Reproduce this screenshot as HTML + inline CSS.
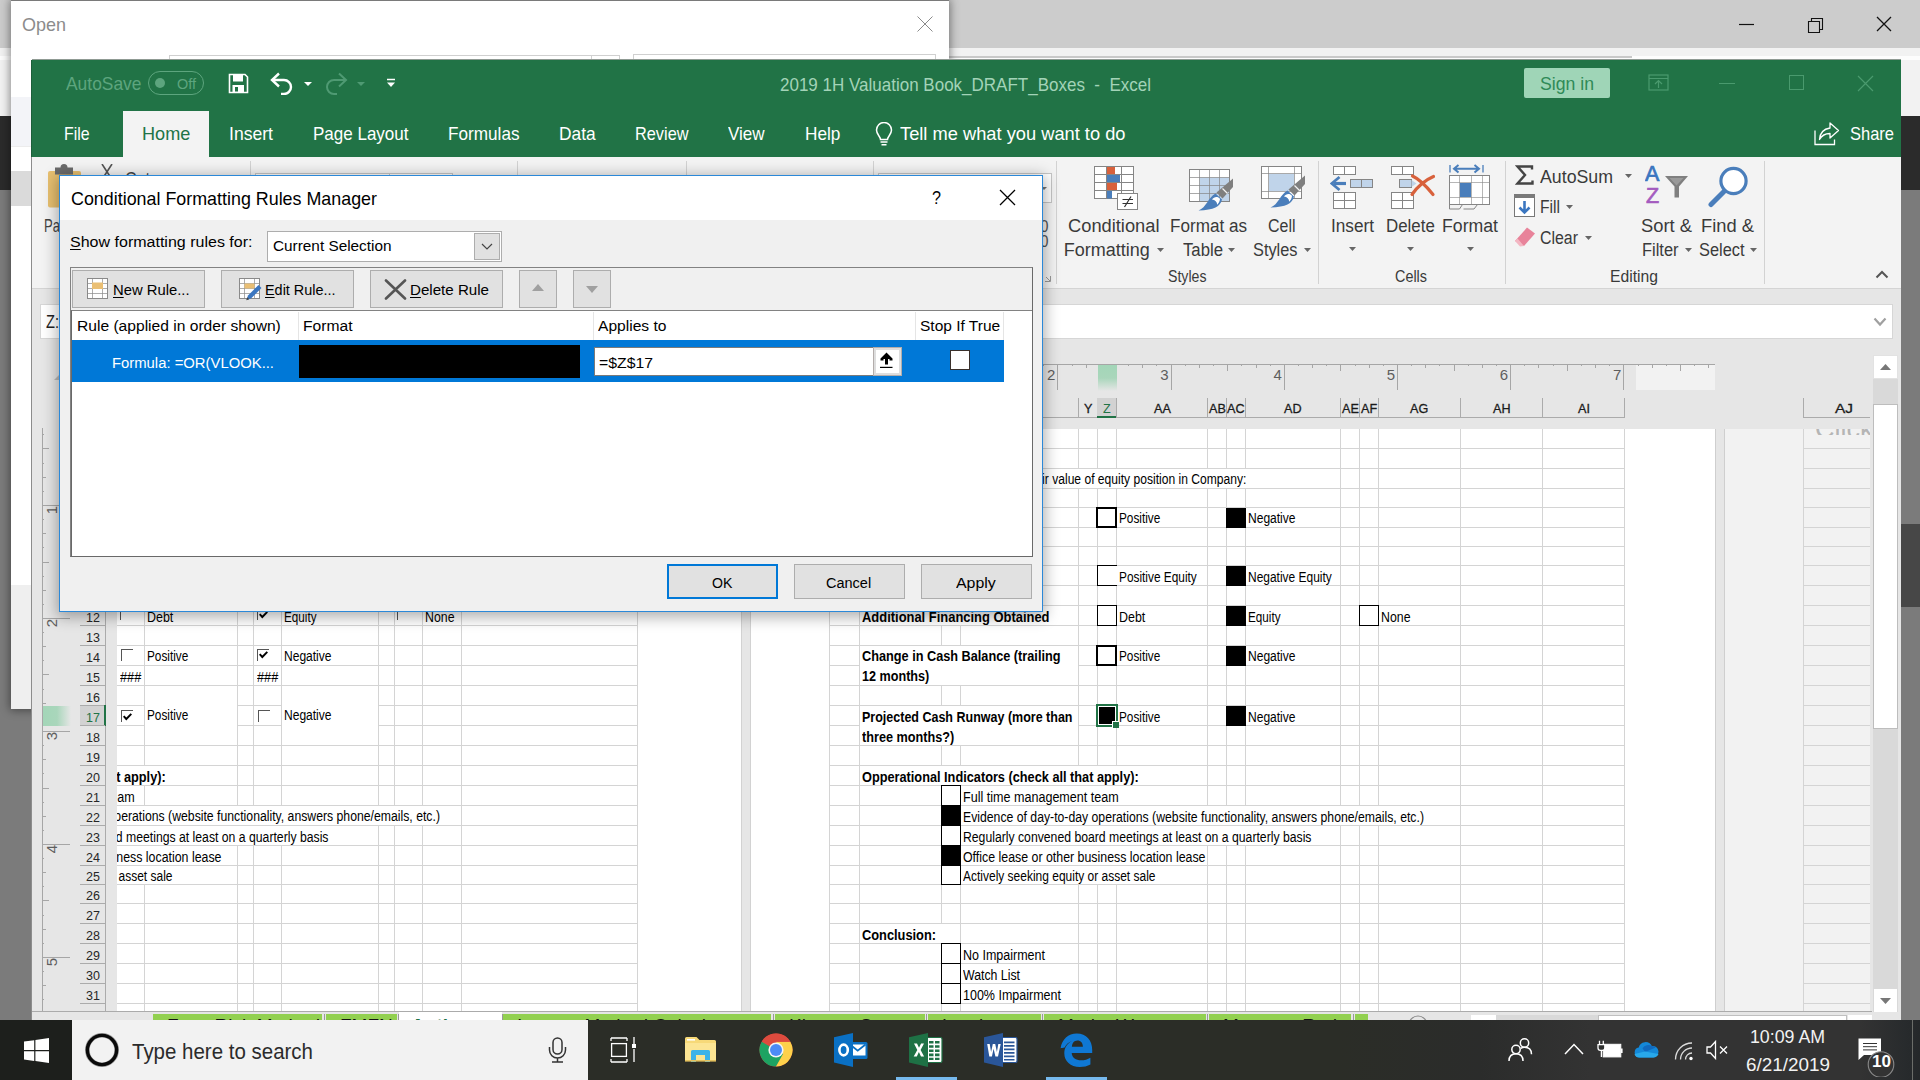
<!DOCTYPE html><html><head><meta charset="utf-8"><title>Excel - Conditional Formatting Rules Manager</title><style>html,body{margin:0;padding:0;}
body{width:1920px;height:1080px;overflow:hidden;position:relative;background:#7b7b7b;font-family:"Liberation Sans",sans-serif;}
div,svg,span.t{position:absolute;}
span.t{white-space:nowrap;transform-origin:0 50%;}
u{text-decoration-thickness:1px;text-underline-offset:2px;}
</style></head><body>
<!-- background -->
<div style="left:0px;top:0px;width:1920px;height:48px;background:#cccccc;"></div><div style="left:0px;top:48px;width:1920px;height:68px;background:#f2f2f2;"></div><div style="left:0px;top:56px;width:1920px;height:4px;background:#fdfdfd;"></div><div style="left:949px;top:56px;width:683px;height:1.6px;background:#c9c9c9;"></div><div style="left:0px;top:116px;width:1920px;height:74.5px;background:#2b2b2b;"></div><div style="left:0px;top:190px;width:1920px;height:890px;background:#7b7b7b;"></div><div style="left:1901px;top:524px;width:19px;height:83px;background:#474747;"></div><svg style="left:1730px;top:8px;" width="170" height="32" viewBox="0 0 170 32"><path d="M9 16.5h15" stroke="#111" stroke-width="1.2" fill="none"/><path d="M78.5 13.5h11v11h-11z M81.500 13.5v-3h11v11h-3" stroke="#111" stroke-width="1.1" fill="none"/><path d="M147 9l14 14M161 9l-14 14" stroke="#111" stroke-width="1.3" fill="none"/></svg><div style="left:11px;top:0px;width:938px;height:709px;background:#ffffff;border-top:1px solid #7a7a7a;box-sizing:border-box;box-shadow:0 0 9px 1px rgba(0,0,0,.45);overflow:hidden;"><div style="left:0px;top:96px;width:21px;height:48.5px;background:#f3f4f8;"></div><div style="left:0px;top:145px;width:21px;height:1px;background:#ececec;"></div><div style="left:0px;top:169.5px;width:21px;height:35px;background:#dadada;"></div><div style="left:0px;top:584px;width:938px;height:125px;background:#efefef;"></div><div style="left:158px;top:54px;width:451px;height:20px;background:#fff;border:1px solid #d0d0d0;box-sizing:border-box;"></div><div style="left:580px;top:54px;width:1px;height:20px;background:#d0d0d0;"></div><div style="left:622px;top:53px;width:303px;height:20px;background:#fff;border:1px solid #d0d0d0;box-sizing:border-box;"></div><span class="t" style="left:11.00px;top:13.50px;font-size:19px;line-height:19px;color:#8c8c8c;transform:scaleX(0.9467);">Open</span><svg style="left:904.5px;top:13.5px;" width="18" height="18" viewBox="0 0 18 18"><path d="M1.5 1.5l15 15M16.5 1.5l-15 15" stroke="#8a8a8a" stroke-width="1" fill="none"/></svg></div>
<!-- excel window -->
<div style="left:31px;top:60px;width:1px;height:97px;background:#1c5e3a;"></div><div style="left:31px;top:157px;width:1px;height:863px;background:#8c8c8c;"></div><div style="left:32px;top:60px;width:1869px;height:960px;background:#e6e6e6;"></div><div style="left:32px;top:60px;width:1869px;height:97px;background:#217346;"></div><div style="left:32px;top:59px;width:1869px;height:1px;background:#8f9a93;"></div><span class="t" style="left:65.50px;top:73.50px;font-size:19px;line-height:19px;color:#5da57e;transform:scaleX(0.9163);">AutoSave</span><div style="left:148px;top:71px;width:56px;height:24px;border:1px solid #5da57e;border-radius:12px;box-sizing:border-box;"></div><div style="left:155px;top:78px;width:10px;height:10px;background:#5da57e;border-radius:5px;"></div><span class="t" style="left:177.00px;top:75.50px;font-size:15px;line-height:15px;color:#5da57e;transform:scaleX(0.9629);">Off</span><svg style="left:228px;top:73px;" width="21" height="21" viewBox="0 0 21 21"><path d="M1.500 1.500h15.500l2.500 2.500v15.500h-18z" fill="none" stroke="#fff" stroke-width="1.600"/><rect x="5" y="1.500" width="10" height="7" fill="#fff"/><rect x="4.500" y="12" width="11.500" height="7.500" fill="#fff"/><rect x="7" y="14" width="3" height="4.500" fill="#217346"/></svg><svg style="left:270px;top:72px;" width="24" height="23" viewBox="0 0 24 23"><path d="M9 1.500L2 8l7 6.500" fill="none" stroke="#fff" stroke-width="2.400"/><path d="M2.500 8H14a7 7 0 0 1 0 14h-3" fill="none" stroke="#fff" stroke-width="2.400"/></svg><svg style="left:304px;top:82px;" width="8" height="4" viewBox="0 0 8 4"><path d="M0 0h8l-4.0 4z" fill="#fff"/></svg><svg style="left:324px;top:72px;" width="24" height="23" viewBox="0 0 24 23"><path d="M15 1.500L22 8l-7 6.500" fill="none" stroke="#4f9a73" stroke-width="2"/><path d="M21.500 8H10a7 7 0 0 0 0 14h3" fill="none" stroke="#4f9a73" stroke-width="2"/></svg><svg style="left:357px;top:82px;" width="8" height="4" viewBox="0 0 8 4"><path d="M0 0h8l-4.0 4z" fill="#4f9a73"/></svg><svg style="left:386px;top:78px;" width="10" height="10" viewBox="0 0 10 10"><path d="M1 1.500h8" stroke="#fff" stroke-width="1.500"/><path d="M1 4.500h8l-4 4.500z" fill="#fff"/></svg><span class="t" style="left:780.00px;top:74.50px;font-size:19px;line-height:19px;color:#a3d3b8;transform:scaleX(0.8947);white-space:pre;">2019 1H Valuation Book_DRAFT_Boxes  -  Excel</span><div style="left:1524px;top:68px;width:86px;height:30px;background:#9fd5b7;border-radius:2px;"></div><span class="t" style="left:1540.00px;top:73.50px;font-size:19px;line-height:19px;color:#2f8a57;transform:scaleX(0.9295);">Sign in</span><svg style="left:1648px;top:74px;" width="22" height="18" viewBox="0 0 22 18"><rect x="1" y="1" width="19" height="15" fill="none" stroke="#4a9a6e" stroke-width="1.200"/><path d="M1 4.500h19M10.500 14V7M7 10l3.500-3.500L14 10" fill="none" stroke="#4a9a6e" stroke-width="1.200"/></svg><div style="left:1719px;top:83px;width:16px;height:1px;background:#4a9a6e;"></div><div style="left:1789px;top:75px;width:15px;height:15px;border:1px solid #4a9a6e;box-sizing:border-box;"></div><svg style="left:1857px;top:75px;" width="17" height="17" viewBox="0 0 17 17"><path d="M1 1l15 15M16 1L1 16" stroke="#4a9a6e" stroke-width="1.200"/></svg><div style="left:123px;top:111px;width:86px;height:46px;background:#f3f3f3;"></div><span class="t" style="left:63.70px;top:123.50px;font-size:19px;line-height:19px;color:#fff;transform:scaleX(0.8362);">File</span><span class="t" style="left:229.00px;top:123.50px;font-size:19px;line-height:19px;color:#fff;transform:scaleX(0.9259);">Insert</span><span class="t" style="left:312.50px;top:123.50px;font-size:19px;line-height:19px;color:#fff;transform:scaleX(0.8951);">Page Layout</span><span class="t" style="left:447.50px;top:123.50px;font-size:19px;line-height:19px;color:#fff;transform:scaleX(0.9030);">Formulas</span><span class="t" style="left:559.00px;top:123.50px;font-size:19px;line-height:19px;color:#fff;transform:scaleX(0.9120);">Data</span><span class="t" style="left:635.30px;top:123.50px;font-size:19px;line-height:19px;color:#fff;transform:scaleX(0.8588);">Review</span><span class="t" style="left:728.40px;top:123.50px;font-size:19px;line-height:19px;color:#fff;transform:scaleX(0.8962);">View</span><span class="t" style="left:804.60px;top:123.50px;font-size:19px;line-height:19px;color:#fff;transform:scaleX(0.9060);">Help</span><span class="t" style="left:141.70px;top:123.50px;font-size:19px;line-height:19px;color:#217346;transform:scaleX(0.9530);">Home</span><svg style="left:874px;top:122px;" width="20" height="25" viewBox="0 0 20 25"><path d="M6.500 17.500c0-3-4-5-4-9.500a7.500 7.500 0 0 1 15 0c0 4.500-4 6.500-4 9.500z" fill="none" stroke="#fff" stroke-width="1.500"/><path d="M6.500 20h7M7.500 22.800h5" stroke="#fff" stroke-width="1.500"/></svg><span class="t" style="left:900.00px;top:123.50px;font-size:19px;line-height:19px;color:#fff;transform:scaleX(0.9618);">Tell me what you want to do</span><svg style="left:1814px;top:122px;" width="27" height="24" viewBox="0 0 27 24"><path d="M1 8.500v14h19.500v-5" fill="none" stroke="#fff" stroke-width="1.300"/><path d="M16 1l8.500 7.500-8.500 7.500v-4.500c-5 0-8 1.500-10.500 6 .5-7 4-10.500 10.500-11.500z" fill="none" stroke="#fff" stroke-width="1.300" stroke-linejoin="round"/></svg><span class="t" style="left:1850.00px;top:123.50px;font-size:19px;line-height:19px;color:#fff;transform:scaleX(0.8678);">Share</span><div style="left:32px;top:157px;width:1869px;height:131px;background:#f3f3f3;"></div><div style="left:32px;top:288px;width:1869px;height:1px;background:#d4d4d4;"></div><div style="left:250px;top:161px;width:1px;height:123px;background:#d2d2d2;"></div><div style="left:517px;top:161px;width:1px;height:123px;background:#d2d2d2;"></div><div style="left:686px;top:161px;width:1px;height:123px;background:#d2d2d2;"></div><div style="left:873px;top:161px;width:1px;height:123px;background:#d2d2d2;"></div><div style="left:1056px;top:161px;width:1px;height:123px;background:#d2d2d2;"></div><div style="left:1318px;top:161px;width:1px;height:123px;background:#d2d2d2;"></div><div style="left:1505px;top:161px;width:1px;height:123px;background:#d2d2d2;"></div><div style="left:1764px;top:161px;width:1px;height:123px;background:#d2d2d2;"></div><svg style="left:48px;top:164px;" width="34" height="46" viewBox="0 0 34 46"><rect x="0" y="7" width="33" height="36.500" rx="2" fill="#e8c070"/><path d="M7 3.500h5.500a3.500 3.500 0 0 1 7 0H25v7H7z" fill="#6b6b6b"/><rect x="13" y="14" width="18" height="27" fill="#fff"/></svg><span class="t" style="left:44.00px;top:215.50px;font-size:19px;line-height:19px;color:#444;transform:scaleX(0.6885);">Pa</span><svg style="left:100px;top:164px;" width="15" height="15" viewBox="0 0 15 15"><path d="M2 0l9 14M12 0L3 14" stroke="#555" stroke-width="1.600" fill="none"/></svg><span class="t" style="left:125.00px;top:170.00px;font-size:18px;line-height:18px;color:#444;transform:scaleX(0.8924);">Cut</span><div style="left:255px;top:173px;width:198px;height:30px;background:#fff;border:1px solid #c6c6c6;box-sizing:border-box;"></div><div style="left:389px;top:173px;width:1px;height:30px;background:#c6c6c6;"></div><div style="left:878px;top:173px;width:174px;height:30px;background:#fff;border:1px solid #c6c6c6;box-sizing:border-box;"></div><svg style="left:1041px;top:187px;" width="6" height="3" viewBox="0 0 6 3"><path d="M0 0h6l-3.0 3z" fill="#777"/></svg><span class="t" style="left:1039.50px;top:219.00px;font-size:16px;line-height:16px;color:#555;transform:scaleX(0.9552);">0</span><span class="t" style="left:1039.50px;top:234.00px;font-size:16px;line-height:16px;color:#555;transform:scaleX(0.9552);">0</span><svg style="left:1044px;top:275px;" width="7" height="7" viewBox="0 0 7 7"><path d="M0.500 0.500v0M6.500 1v5.500H1M2 2l4 4" fill="none" stroke="#999" stroke-width="1"/></svg><span class="t" style="left:1067.50px;top:217.10px;font-size:18px;line-height:18px;color:#3a3a3a;transform:scaleX(1.0159);">Conditional</span><span class="t" style="left:1063.70px;top:240.80px;font-size:18px;line-height:18px;color:#3a3a3a;">Formatting</span><svg style="left:1157px;top:248px;" width="7" height="4" viewBox="0 0 7 4"><path d="M0 0h7l-3.5 4z" fill="#666"/></svg><span class="t" style="left:1170.00px;top:217.10px;font-size:18px;line-height:18px;color:#3a3a3a;transform:scaleX(0.9503);">Format as</span><span class="t" style="left:1182.50px;top:240.80px;font-size:18px;line-height:18px;color:#3a3a3a;transform:scaleX(0.9294);">Table</span><svg style="left:1228px;top:248px;" width="7" height="4" viewBox="0 0 7 4"><path d="M0 0h7l-3.5 4z" fill="#666"/></svg><span class="t" style="left:1268.00px;top:217.10px;font-size:18px;line-height:18px;color:#3a3a3a;transform:scaleX(0.8868);">Cell</span><span class="t" style="left:1253.00px;top:240.80px;font-size:18px;line-height:18px;color:#3a3a3a;transform:scaleX(0.9078);">Styles</span><svg style="left:1304px;top:248px;" width="7" height="4" viewBox="0 0 7 4"><path d="M0 0h7l-3.5 4z" fill="#666"/></svg><span class="t" style="left:1167.50px;top:267.50px;font-size:17px;line-height:17px;color:#3a3a3a;transform:scaleX(0.8316);">Styles</span><svg style="left:1094px;top:166px;" width="45" height="45" viewBox="0 0 45 45"><rect x="0.500" y="0.500" width="39" height="32" fill="#fff" stroke="#858585"/><path d="M0.500 8.500h39M0.500 16.500h39M0.500 24.500h39M12.500 0.500v32M27.500 0.500v32" stroke="#858585" fill="none"/><rect x="13" y="1" width="8" height="7" fill="#d8613c"/><rect x="13" y="9" width="13" height="7" fill="#4a7ebb"/><rect x="13" y="17" width="10" height="7" fill="#d8613c"/><rect x="13" y="25" width="5" height="7.500" fill="#4a7ebb"/><rect x="23.500" y="27.500" width="20" height="16" fill="#fff" stroke="#858585"/><path d="M28.500 33.500h10.500M28.500 37.500h10.500M37 30.500l-6.500 10.500" stroke="#333" stroke-width="1.200" fill="none"/></svg><svg style="left:1189px;top:168px;" width="46" height="44" viewBox="0 0 46 44"><rect x="0.500" y="1.500" width="40" height="32" fill="#fff" stroke="#858585"/><rect x="10.500" y="9.500" width="30" height="24" fill="#c0d4ea"/><path d="M0.500 9.500h40M0.500 17.500h40M0.500 25.500h40M10.500 1.500v32M20.500 1.500v32M30.500 1.500v32" stroke="#858585" stroke-opacity=".7" fill="none"/><rect x="0.500" y="1.500" width="40" height="32" fill="none" stroke="#858585"/><path d="M44 10.500V19L33.500 30.500l-6-6z" fill="#7f7f7f"/><path d="M33.500 20.500l5 5" stroke="#f3f3f3" stroke-width="1.200"/><path d="M26.500 25.500l6.500 6C31.500 38.500 25 42 9.500 42.500 17.500 39.500 19 29.500 26.500 25.500z" fill="#4a7ebb"/><path d="M23 31.500c2-3 6-3.500 8-.5-.3 2.500-1.300 4.300-2.800 5.700C28.200 33.700 26 32 23 31.500z" fill="#fff"/></svg><svg style="left:1261px;top:165px;" width="46" height="46" viewBox="0 0 46 46"><rect x="0.500" y="1.500" width="40" height="32" fill="#fff" stroke="#858585"/><path d="M0.500 8.500h40M0.500 26.500h40M7.500 1.500v32M33.500 1.500v32" stroke="#858585" stroke-opacity=".7" fill="none"/><rect x="8" y="9" width="25" height="17" fill="#c0d4ea"/><g transform="translate(0,0)"><path d="M44 10.500V19L33.500 30.500l-6-6z" fill="#7f7f7f"/><path d="M33.500 20.500l5 5" stroke="#f3f3f3" stroke-width="1.200"/><path d="M26.500 25.500l6.500 6C31.500 38.500 25 42 9.500 42.500 17.500 39.500 19 29.500 26.500 25.500z" fill="#4a7ebb"/><path d="M23 31.500c2-3 6-3.500 8-.5-.3 2.500-1.300 4.300-2.800 5.700C28.200 33.700 26 32 23 31.500z" fill="#fff"/></g></svg><span class="t" style="left:1330.70px;top:217.10px;font-size:18px;line-height:18px;color:#3a3a3a;transform:scaleX(0.9551);">Insert</span><svg style="left:1349px;top:247px;" width="7" height="4" viewBox="0 0 7 4"><path d="M0 0h7l-3.5 4z" fill="#666"/></svg><span class="t" style="left:1385.70px;top:217.10px;font-size:18px;line-height:18px;color:#3a3a3a;transform:scaleX(0.9378);">Delete</span><svg style="left:1407px;top:247px;" width="7" height="4" viewBox="0 0 7 4"><path d="M0 0h7l-3.5 4z" fill="#666"/></svg><span class="t" style="left:1442.00px;top:217.10px;font-size:18px;line-height:18px;color:#3a3a3a;transform:scaleX(0.9823);">Format</span><svg style="left:1467px;top:247px;" width="7" height="4" viewBox="0 0 7 4"><path d="M0 0h7l-3.5 4z" fill="#666"/></svg><span class="t" style="left:1395.00px;top:267.50px;font-size:17px;line-height:17px;color:#3a3a3a;transform:scaleX(0.8468);">Cells</span><svg style="left:1330px;top:166px;" width="44" height="44" viewBox="0 0 44 44"><rect x="3.5" y="0.5" width="11" height="8" fill="#fff" stroke="#858585"/><rect x="14.5" y="0.5" width="11" height="8" fill="#fff" stroke="#858585"/><rect x="20.5" y="13.5" width="11" height="8" fill="#c0d4ea" stroke="#858585"/><rect x="31.5" y="13.5" width="11" height="8" fill="#c0d4ea" stroke="#858585"/><rect x="3.5" y="26.5" width="11" height="8" fill="#fff" stroke="#858585"/><rect x="14.5" y="26.5" width="11" height="8" fill="#fff" stroke="#858585"/><rect x="3.5" y="34.5" width="11" height="8" fill="#fff" stroke="#858585"/><rect x="14.5" y="34.5" width="11" height="8" fill="#fff" stroke="#858585"/><path d="M16 17.500H4" fill="none" stroke="#4a7ebb" stroke-width="3.200"/><path d="M9.500 11L1.800 17.500l7.700 6.500" fill="none" stroke="#4a7ebb" stroke-width="2.800"/></svg><svg style="left:1390px;top:166px;" width="46" height="44" viewBox="0 0 46 44"><rect x="1.5" y="0.5" width="11" height="8" fill="#fff" stroke="#858585"/><rect x="12.5" y="0.5" width="11" height="8" fill="#fff" stroke="#858585"/><rect x="9.5" y="13.5" width="12" height="8" fill="#c0d4ea" stroke="#858585"/><path d="M21.500 14l5 3.500-5 3.500z" fill="#c0d4ea"/><rect x="1.5" y="26.5" width="11" height="8" fill="#fff" stroke="#858585"/><rect x="12.5" y="26.5" width="11" height="8" fill="#fff" stroke="#858585"/><rect x="1.5" y="34.5" width="11" height="8" fill="#fff" stroke="#858585"/><rect x="12.5" y="34.5" width="11" height="8" fill="#fff" stroke="#858585"/><path d="M22.500 10C29 13 37 21 43 28.500M43.500 10.500C36 13.500 27 21 22 28.500" stroke="#d8613c" stroke-width="3.200" fill="none" stroke-linecap="round"/></svg><svg style="left:1449px;top:164px;" width="44" height="47" viewBox="0 0 44 47"><path d="M1 1v7.500M34 1v7.500" stroke="#4a7ebb" stroke-width="1.300" fill="none"/><path d="M5.500 4.700h24M9.500 1L5 4.700l4.500 3.800M25.500 1L30 4.700l-4.500 3.800" stroke="#4a7ebb" stroke-width="2" fill="none"/><rect x="0.500" y="11.500" width="40" height="29" fill="#fff" stroke="#858585"/><path d="M0.500 18.500h40M0.500 33.500h40M10.500 11.500v29M22.500 11.500v29M33.500 11.500v29" stroke="#858585" stroke-opacity=".6" fill="none"/><rect x="11" y="19" width="11" height="14" fill="#4a7ebb"/><path d="M0.500 40.500v4.500h10l3-4.500M14.500 45h10.500l3.500-4.500" stroke="#858585" fill="none"/></svg><svg style="left:1515px;top:165px;" width="19" height="21" viewBox="0 0 19 21"><path d="M17 4.500V1.500H2.500L10 10 2.500 18.500h15v-3" fill="none" stroke="#444" stroke-width="2.400"/></svg><span class="t" style="left:1540.00px;top:167.60px;font-size:18px;line-height:18px;color:#3a3a3a;transform:scaleX(0.9859);">AutoSum</span><svg style="left:1625px;top:174px;" width="7" height="4" viewBox="0 0 7 4"><path d="M0 0h7l-3.5 4z" fill="#666"/></svg><svg style="left:1514px;top:194px;" width="21" height="23" viewBox="0 0 21 23"><rect x="0.500" y="3.500" width="20" height="19" fill="#fff" stroke="#777"/><rect x="0" y="0" width="21" height="4" fill="#7a7a7a"/><path d="M10.500 7v11M5.500 13.500l5 5 5-5" fill="none" stroke="#3b76c0" stroke-width="2.600"/></svg><span class="t" style="left:1540.00px;top:197.50px;font-size:18px;line-height:18px;color:#3a3a3a;transform:scaleX(0.8697);">Fill</span><svg style="left:1566px;top:205px;" width="7" height="4" viewBox="0 0 7 4"><path d="M0 0h7l-3.5 4z" fill="#666"/></svg><svg style="left:1514px;top:226px;" width="22" height="22" viewBox="0 0 22 22"><path d="M1 15L13 1.500l8 6L10 20z" fill="#e8839a"/><path d="M1 15l5 5.500 4-.500L3.500 12.500z" fill="#f3b6c2"/></svg><span class="t" style="left:1540.00px;top:229.30px;font-size:18px;line-height:18px;color:#3a3a3a;transform:scaleX(0.8834);">Clear</span><svg style="left:1585px;top:236px;" width="7" height="4" viewBox="0 0 7 4"><path d="M0 0h7l-3.5 4z" fill="#666"/></svg><svg style="left:1645px;top:164px;" width="45" height="44" viewBox="0 0 45 44"><text x="0" y="16.500" font-family="Liberation Sans" font-size="21.500" fill="#3b76c0" stroke="#3b76c0" stroke-width=".7">A</text><text x="1" y="38.500" font-family="Liberation Sans" font-size="21.500" fill="#a45bbf" stroke="#a45bbf" stroke-width=".7">Z</text><path d="M20 12h23L34 22.500v11h-4.500v-11z" fill="#7f7f7f"/><path d="M24.500 14h14l-7 7.500z" fill="#9a9a9a"/></svg><span class="t" style="left:1641.00px;top:217.10px;font-size:18px;line-height:18px;color:#3a3a3a;transform:scaleX(1.0196);">Sort &amp;</span><span class="t" style="left:1641.50px;top:240.80px;font-size:18px;line-height:18px;color:#3a3a3a;transform:scaleX(0.9124);">Filter</span><svg style="left:1685px;top:248px;" width="7" height="4" viewBox="0 0 7 4"><path d="M0 0h7l-3.5 4z" fill="#666"/></svg><svg style="left:1706px;top:164px;" width="44" height="44" viewBox="0 0 44 44"><circle cx="27.500" cy="17" r="12.600" fill="#fff" stroke="#4a7ebb" stroke-width="3.200"/><path d="M18 27.500L5 40.500" stroke="#4a7ebb" stroke-width="5" stroke-linecap="round"/></svg><span class="t" style="left:1701.00px;top:217.10px;font-size:18px;line-height:18px;color:#3a3a3a;transform:scaleX(1.0187);">Find &amp;</span><span class="t" style="left:1698.50px;top:240.80px;font-size:18px;line-height:18px;color:#3a3a3a;transform:scaleX(0.9094);">Select</span><svg style="left:1750px;top:248px;" width="7" height="4" viewBox="0 0 7 4"><path d="M0 0h7l-3.5 4z" fill="#666"/></svg><span class="t" style="left:1610.00px;top:267.50px;font-size:17px;line-height:17px;color:#3a3a3a;transform:scaleX(0.9234);">Editing</span><svg style="left:1875px;top:270px;" width="14" height="9" viewBox="0 0 14 9"><path d="M1.500 7.500l5.500-5.500 5.500 5.500" fill="none" stroke="#555" stroke-width="2"/></svg><div style="left:40px;top:304px;width:75px;height:35px;background:#fff;border:1px solid #d6d6d6;box-sizing:border-box;"></div><span class="t" style="left:46.00px;top:311.50px;font-size:19px;line-height:19px;color:#222;transform:scaleX(0.7699);">Z:</span><div style="left:150px;top:304px;width:1743px;height:35px;background:#fff;border:1px solid #d6d6d6;box-sizing:border-box;"></div><svg style="left:1873px;top:317px;" width="14" height="10" viewBox="0 0 14 10"><path d="M1.500 1.500l5.500 6 5.500-6" fill="none" stroke="#a0a0a0" stroke-width="2.200"/></svg>
<!-- sheet -->
<div style="left:1636px;top:365px;width:79px;height:25px;background:#f2f2f2;"></div><div style="left:751px;top:364px;width:964px;height:1px;background:#a6a6a6;"></div><div style="left:760px;top:364px;width:1px;height:2px;background:#a6a6a6"></div><div style="left:774px;top:364px;width:1px;height:7px;background:#a6a6a6"></div><div style="left:789px;top:364px;width:1px;height:2px;background:#a6a6a6"></div><div style="left:803px;top:364px;width:1px;height:4px;background:#a6a6a6"></div><div style="left:817px;top:364px;width:1px;height:2px;background:#a6a6a6"></div><div style="left:831px;top:364px;width:1px;height:26px;background:#a6a6a6"></div><div style="left:845px;top:364px;width:1px;height:2px;background:#a6a6a6"></div><div style="left:859px;top:364px;width:1px;height:4px;background:#a6a6a6"></div><div style="left:873px;top:364px;width:1px;height:2px;background:#a6a6a6"></div><div style="left:888px;top:364px;width:1px;height:7px;background:#a6a6a6"></div><div style="left:902px;top:364px;width:1px;height:2px;background:#a6a6a6"></div><div style="left:916px;top:364px;width:1px;height:4px;background:#a6a6a6"></div><div style="left:930px;top:364px;width:1px;height:2px;background:#a6a6a6"></div><div style="left:944px;top:364px;width:1px;height:26px;background:#a6a6a6"></div><div style="left:958px;top:364px;width:1px;height:2px;background:#a6a6a6"></div><div style="left:972px;top:364px;width:1px;height:4px;background:#a6a6a6"></div><div style="left:987px;top:364px;width:1px;height:2px;background:#a6a6a6"></div><div style="left:1001px;top:364px;width:1px;height:7px;background:#a6a6a6"></div><div style="left:1015px;top:364px;width:1px;height:2px;background:#a6a6a6"></div><div style="left:1029px;top:364px;width:1px;height:4px;background:#a6a6a6"></div><div style="left:1043px;top:364px;width:1px;height:2px;background:#a6a6a6"></div><div style="left:1057px;top:364px;width:1px;height:26px;background:#a6a6a6"></div><div style="left:1072px;top:364px;width:1px;height:2px;background:#a6a6a6"></div><div style="left:1086px;top:364px;width:1px;height:4px;background:#a6a6a6"></div><div style="left:1100px;top:364px;width:1px;height:2px;background:#a6a6a6"></div><div style="left:1114px;top:364px;width:1px;height:7px;background:#a6a6a6"></div><div style="left:1128px;top:364px;width:1px;height:2px;background:#a6a6a6"></div><div style="left:1142px;top:364px;width:1px;height:4px;background:#a6a6a6"></div><div style="left:1156px;top:364px;width:1px;height:2px;background:#a6a6a6"></div><div style="left:1171px;top:364px;width:1px;height:26px;background:#a6a6a6"></div><div style="left:1185px;top:364px;width:1px;height:2px;background:#a6a6a6"></div><div style="left:1199px;top:364px;width:1px;height:4px;background:#a6a6a6"></div><div style="left:1213px;top:364px;width:1px;height:2px;background:#a6a6a6"></div><div style="left:1227px;top:364px;width:1px;height:7px;background:#a6a6a6"></div><div style="left:1241px;top:364px;width:1px;height:2px;background:#a6a6a6"></div><div style="left:1256px;top:364px;width:1px;height:4px;background:#a6a6a6"></div><div style="left:1270px;top:364px;width:1px;height:2px;background:#a6a6a6"></div><div style="left:1284px;top:364px;width:1px;height:26px;background:#a6a6a6"></div><div style="left:1298px;top:364px;width:1px;height:2px;background:#a6a6a6"></div><div style="left:1312px;top:364px;width:1px;height:4px;background:#a6a6a6"></div><div style="left:1326px;top:364px;width:1px;height:2px;background:#a6a6a6"></div><div style="left:1340px;top:364px;width:1px;height:7px;background:#a6a6a6"></div><div style="left:1355px;top:364px;width:1px;height:2px;background:#a6a6a6"></div><div style="left:1369px;top:364px;width:1px;height:4px;background:#a6a6a6"></div><div style="left:1383px;top:364px;width:1px;height:2px;background:#a6a6a6"></div><div style="left:1397px;top:364px;width:1px;height:26px;background:#a6a6a6"></div><div style="left:1411px;top:364px;width:1px;height:2px;background:#a6a6a6"></div><div style="left:1425px;top:364px;width:1px;height:4px;background:#a6a6a6"></div><div style="left:1439px;top:364px;width:1px;height:2px;background:#a6a6a6"></div><div style="left:1454px;top:364px;width:1px;height:7px;background:#a6a6a6"></div><div style="left:1468px;top:364px;width:1px;height:2px;background:#a6a6a6"></div><div style="left:1482px;top:364px;width:1px;height:4px;background:#a6a6a6"></div><div style="left:1496px;top:364px;width:1px;height:2px;background:#a6a6a6"></div><div style="left:1510px;top:364px;width:1px;height:26px;background:#a6a6a6"></div><div style="left:1524px;top:364px;width:1px;height:2px;background:#a6a6a6"></div><div style="left:1538px;top:364px;width:1px;height:4px;background:#a6a6a6"></div><div style="left:1553px;top:364px;width:1px;height:2px;background:#a6a6a6"></div><div style="left:1567px;top:364px;width:1px;height:7px;background:#a6a6a6"></div><div style="left:1581px;top:364px;width:1px;height:2px;background:#a6a6a6"></div><div style="left:1595px;top:364px;width:1px;height:4px;background:#a6a6a6"></div><div style="left:1609px;top:364px;width:1px;height:2px;background:#a6a6a6"></div><div style="left:1623px;top:364px;width:1px;height:26px;background:#a6a6a6"></div><div style="left:1638px;top:364px;width:1px;height:2px;background:#a6a6a6"></div><div style="left:1652px;top:364px;width:1px;height:4px;background:#a6a6a6"></div><div style="left:1666px;top:364px;width:1px;height:2px;background:#a6a6a6"></div><div style="left:1680px;top:364px;width:1px;height:7px;background:#a6a6a6"></div><div style="left:1694px;top:364px;width:1px;height:2px;background:#a6a6a6"></div><div style="left:1708px;top:364px;width:1px;height:4px;background:#a6a6a6"></div><span class="t" style="left:933.86px;top:367.00px;font-size:15px;line-height:15px;color:#5e5e5e;">1</span><span class="t" style="left:1047.06px;top:367.00px;font-size:15px;line-height:15px;color:#5e5e5e;">2</span><span class="t" style="left:1160.26px;top:367.00px;font-size:15px;line-height:15px;color:#5e5e5e;">3</span><span class="t" style="left:1273.46px;top:367.00px;font-size:15px;line-height:15px;color:#5e5e5e;">4</span><span class="t" style="left:1386.66px;top:367.00px;font-size:15px;line-height:15px;color:#5e5e5e;">5</span><span class="t" style="left:1499.86px;top:367.00px;font-size:15px;line-height:15px;color:#5e5e5e;">6</span><span class="t" style="left:1613.06px;top:367.00px;font-size:15px;line-height:15px;color:#5e5e5e;">7</span><div style="left:1098px;top:365px;width:19px;height:26px;background:linear-gradient(180deg,#a3d6b8,#a9d6bb 50%,rgba(180,216,196,0));"></div><div style="left:829px;top:417px;width:796px;height:1px;background:#ababab;"></div><div style="left:829px;top:398px;width:1px;height:20px;background:#ababab;"></div><div style="left:941px;top:398px;width:1px;height:20px;background:#ababab;"></div><span class="t" style="left:896.29px;top:402.25px;font-size:13px;line-height:13px;color:#1a1a1a;transform:scaleX(0.9700);-webkit-text-stroke:0.3px #1a1a1a;">X</span><div style="left:960px;top:398px;width:1px;height:20px;background:#ababab;"></div><div style="left:1078px;top:398px;width:1px;height:20px;background:#ababab;"></div><span class="t" style="left:1015.29px;top:402.25px;font-size:13px;line-height:13px;color:#1a1a1a;transform:scaleX(0.9700);-webkit-text-stroke:0.3px #1a1a1a;">X</span><div style="left:1097px;top:398px;width:1px;height:20px;background:#ababab;"></div><span class="t" style="left:1083.79px;top:402.25px;font-size:13px;line-height:13px;color:#1a1a1a;transform:scaleX(0.9700);-webkit-text-stroke:0.3px #1a1a1a;">Y</span><div style="left:1097px;top:398px;width:20px;height:19px;background:#d2d2d2;"></div><div style="left:1097px;top:416px;width:20px;height:2px;background:#217346;"></div><div style="left:1116px;top:398px;width:1px;height:20px;background:#ababab;"></div><span class="t" style="left:1103.15px;top:402.25px;font-size:13px;line-height:13px;color:#217346;transform:scaleX(0.9700);">Z</span><div style="left:1207px;top:398px;width:1px;height:20px;background:#ababab;"></div><span class="t" style="left:1153.59px;top:402.25px;font-size:13px;line-height:13px;color:#1a1a1a;transform:scaleX(0.9700);-webkit-text-stroke:0.3px #1a1a1a;">AA</span><div style="left:1226px;top:398px;width:1px;height:20px;background:#ababab;"></div><span class="t" style="left:1208.59px;top:402.25px;font-size:13px;line-height:13px;color:#1a1a1a;transform:scaleX(0.9700);-webkit-text-stroke:0.3px #1a1a1a;">AB</span><div style="left:1245px;top:398px;width:1px;height:20px;background:#ababab;"></div><span class="t" style="left:1227.24px;top:402.25px;font-size:13px;line-height:13px;color:#1a1a1a;transform:scaleX(0.9700);-webkit-text-stroke:0.3px #1a1a1a;">AC</span><div style="left:1340px;top:398px;width:1px;height:20px;background:#ababab;"></div><span class="t" style="left:1284.24px;top:402.25px;font-size:13px;line-height:13px;color:#1a1a1a;transform:scaleX(0.9700);-webkit-text-stroke:0.3px #1a1a1a;">AD</span><div style="left:1359px;top:398px;width:1px;height:20px;background:#ababab;"></div><span class="t" style="left:1341.59px;top:402.25px;font-size:13px;line-height:13px;color:#1a1a1a;transform:scaleX(0.9700);-webkit-text-stroke:0.3px #1a1a1a;">AE</span><div style="left:1378px;top:398px;width:1px;height:20px;background:#ababab;"></div><span class="t" style="left:1360.94px;top:402.25px;font-size:13px;line-height:13px;color:#1a1a1a;transform:scaleX(0.9700);-webkit-text-stroke:0.3px #1a1a1a;">AF</span><div style="left:1460px;top:398px;width:1px;height:20px;background:#ababab;"></div><span class="t" style="left:1410.39px;top:402.25px;font-size:13px;line-height:13px;color:#1a1a1a;transform:scaleX(0.9700);-webkit-text-stroke:0.3px #1a1a1a;">AG</span><div style="left:1542px;top:398px;width:1px;height:20px;background:#ababab;"></div><span class="t" style="left:1492.74px;top:402.25px;font-size:13px;line-height:13px;color:#1a1a1a;transform:scaleX(0.9700);-webkit-text-stroke:0.3px #1a1a1a;">AH</span><div style="left:1624px;top:398px;width:1px;height:20px;background:#ababab;"></div><span class="t" style="left:1577.54px;top:402.25px;font-size:13px;line-height:13px;color:#1a1a1a;transform:scaleX(0.9700);-webkit-text-stroke:0.3px #1a1a1a;">AI</span><div style="left:1803px;top:398px;width:1px;height:20px;background:#ababab;"></div><div style="left:1803px;top:417px;width:67px;height:1px;background:#ababab;"></div><span class="t" style="left:1835.00px;top:402.25px;font-size:13px;line-height:13px;color:#1a1a1a;transform:scaleX(1.1864);-webkit-text-stroke:0.3px #1a1a1a;">AJ</span><div style="left:117px;top:429px;width:624px;height:582px;background:#fff;"></div><div style="left:751px;top:429px;width:964px;height:582px;background:#fff;"></div><div style="left:1715px;top:429px;width:1px;height:582px;background:#cfcfcf;"></div><div style="left:741px;top:429px;width:1px;height:582px;background:#d2d2d2;"></div><div style="left:750px;top:429px;width:1px;height:582px;background:#d2d2d2;"></div><div style="left:1724px;top:429px;width:146px;height:582px;background:#f2f2f2;"></div><div style="left:1724px;top:429px;width:1px;height:582px;background:#cfcfcf;"></div><div style="left:1803px;top:448px;width:67px;height:1px;background:#d4d4d4;"></div><div style="left:1803px;top:468px;width:67px;height:1px;background:#d4d4d4;"></div><div style="left:1803px;top:488px;width:67px;height:1px;background:#d4d4d4;"></div><div style="left:1803px;top:507px;width:67px;height:1px;background:#d4d4d4;"></div><div style="left:1803px;top:527px;width:67px;height:1px;background:#d4d4d4;"></div><div style="left:1803px;top:546px;width:67px;height:1px;background:#d4d4d4;"></div><div style="left:1803px;top:565px;width:67px;height:1px;background:#d4d4d4;"></div><div style="left:1803px;top:585px;width:67px;height:1px;background:#d4d4d4;"></div><div style="left:1803px;top:605px;width:67px;height:1px;background:#d4d4d4;"></div><div style="left:1803px;top:625px;width:67px;height:1px;background:#d4d4d4;"></div><div style="left:1803px;top:645px;width:67px;height:1px;background:#d4d4d4;"></div><div style="left:1803px;top:665px;width:67px;height:1px;background:#d4d4d4;"></div><div style="left:1803px;top:685px;width:67px;height:1px;background:#d4d4d4;"></div><div style="left:1803px;top:705px;width:67px;height:1px;background:#d4d4d4;"></div><div style="left:1803px;top:725px;width:67px;height:1px;background:#d4d4d4;"></div><div style="left:1803px;top:745px;width:67px;height:1px;background:#d4d4d4;"></div><div style="left:1803px;top:765px;width:67px;height:1px;background:#d4d4d4;"></div><div style="left:1803px;top:785px;width:67px;height:1px;background:#d4d4d4;"></div><div style="left:1803px;top:805px;width:67px;height:1px;background:#d4d4d4;"></div><div style="left:1803px;top:825px;width:67px;height:1px;background:#d4d4d4;"></div><div style="left:1803px;top:845px;width:67px;height:1px;background:#d4d4d4;"></div><div style="left:1803px;top:865px;width:67px;height:1px;background:#d4d4d4;"></div><div style="left:1803px;top:884px;width:67px;height:1px;background:#d4d4d4;"></div><div style="left:1803px;top:903px;width:67px;height:1px;background:#d4d4d4;"></div><div style="left:1803px;top:923px;width:67px;height:1px;background:#d4d4d4;"></div><div style="left:1803px;top:943px;width:67px;height:1px;background:#d4d4d4;"></div><div style="left:1803px;top:963px;width:67px;height:1px;background:#d4d4d4;"></div><div style="left:1803px;top:983px;width:67px;height:1px;background:#d4d4d4;"></div><div style="left:1803px;top:1003px;width:67px;height:1px;background:#d4d4d4;"></div><div style="left:1803px;top:429px;width:1px;height:582px;background:#d4d4d4;"></div><div style="left:1803px;top:429px;width:67px;height:6px;overflow:hidden"><span class="t" style="left:12px;top:-13px;font-size:27px;line-height:27px;color:#b5b5b5;">Click</span></div><div style="left:117px;top:448px;width:521px;height:1px;background:#d4d4d4;"></div><div style="left:117px;top:468px;width:521px;height:1px;background:#d4d4d4;"></div><div style="left:117px;top:488px;width:521px;height:1px;background:#d4d4d4;"></div><div style="left:117px;top:507px;width:521px;height:1px;background:#d4d4d4;"></div><div style="left:117px;top:527px;width:521px;height:1px;background:#d4d4d4;"></div><div style="left:117px;top:546px;width:521px;height:1px;background:#d4d4d4;"></div><div style="left:117px;top:565px;width:521px;height:1px;background:#d4d4d4;"></div><div style="left:117px;top:585px;width:521px;height:1px;background:#d4d4d4;"></div><div style="left:117px;top:605px;width:521px;height:1px;background:#d4d4d4;"></div><div style="left:117px;top:625px;width:521px;height:1px;background:#d4d4d4;"></div><div style="left:117px;top:645px;width:521px;height:1px;background:#d4d4d4;"></div><div style="left:117px;top:665px;width:521px;height:1px;background:#d4d4d4;"></div><div style="left:117px;top:685px;width:521px;height:1px;background:#d4d4d4;"></div><div style="left:117px;top:705px;width:521px;height:1px;background:#d4d4d4;"></div><div style="left:117px;top:725px;width:521px;height:1px;background:#d4d4d4;"></div><div style="left:117px;top:745px;width:521px;height:1px;background:#d4d4d4;"></div><div style="left:117px;top:765px;width:521px;height:1px;background:#d4d4d4;"></div><div style="left:117px;top:785px;width:521px;height:1px;background:#d4d4d4;"></div><div style="left:117px;top:805px;width:521px;height:1px;background:#d4d4d4;"></div><div style="left:117px;top:825px;width:521px;height:1px;background:#d4d4d4;"></div><div style="left:117px;top:845px;width:521px;height:1px;background:#d4d4d4;"></div><div style="left:117px;top:865px;width:521px;height:1px;background:#d4d4d4;"></div><div style="left:117px;top:884px;width:521px;height:1px;background:#d4d4d4;"></div><div style="left:117px;top:903px;width:521px;height:1px;background:#d4d4d4;"></div><div style="left:117px;top:923px;width:521px;height:1px;background:#d4d4d4;"></div><div style="left:117px;top:943px;width:521px;height:1px;background:#d4d4d4;"></div><div style="left:117px;top:963px;width:521px;height:1px;background:#d4d4d4;"></div><div style="left:117px;top:983px;width:521px;height:1px;background:#d4d4d4;"></div><div style="left:117px;top:1003px;width:521px;height:1px;background:#d4d4d4;"></div><div style="left:144px;top:429px;width:1px;height:582px;background:#d4d4d4;"></div><div style="left:237px;top:429px;width:1px;height:582px;background:#d4d4d4;"></div><div style="left:253px;top:429px;width:1px;height:582px;background:#d4d4d4;"></div><div style="left:281px;top:429px;width:1px;height:582px;background:#d4d4d4;"></div><div style="left:378px;top:429px;width:1px;height:582px;background:#d4d4d4;"></div><div style="left:394px;top:429px;width:1px;height:582px;background:#d4d4d4;"></div><div style="left:422px;top:429px;width:1px;height:582px;background:#d4d4d4;"></div><div style="left:461px;top:429px;width:1px;height:582px;background:#d4d4d4;"></div><div style="left:637px;top:429px;width:1px;height:582px;background:#d4d4d4;"></div><div style="left:145px;top:686px;width:92px;height:59px;background:#fff;"></div><div style="left:282px;top:686px;width:96px;height:59px;background:#fff;"></div><div style="left:117px;top:766px;width:49px;height:19px;background:#fff;"></div><div style="left:117px;top:806px;width:323px;height:19px;background:#fff;"></div><div style="left:117px;top:826px;width:212px;height:19px;background:#fff;"></div><div style="left:117px;top:846px;width:105px;height:19px;background:#fff;"></div><div style="left:117px;top:866px;width:56px;height:18px;background:#fff;"></div><div style="left:117px;top:429px;width:624px;height:582px;overflow:hidden"><span class="t" style="left:30.00px;top:181.20px;font-size:14px;line-height:14px;color:#000;transform:scaleX(0.8875);">Debt</span><span class="t" style="left:166.70px;top:181.20px;font-size:14px;line-height:14px;color:#000;transform:scaleX(0.8352);">Equity</span><span class="t" style="left:308.00px;top:181.20px;font-size:14px;line-height:14px;color:#000;transform:scaleX(0.8813);">None</span><span class="t" style="left:30.00px;top:219.95px;font-size:14px;line-height:14px;color:#000;transform:scaleX(0.8414);">Positive</span><span class="t" style="left:167.20px;top:219.95px;font-size:14px;line-height:14px;color:#000;transform:scaleX(0.8595);">Negative</span><span class="t" style="left:3.00px;top:240.95px;font-size:14px;line-height:14px;color:#000;transform:scaleX(0.9096);">###</span><span class="t" style="left:140.00px;top:240.95px;font-size:14px;line-height:14px;color:#000;transform:scaleX(0.9096);">###</span><span class="t" style="left:30.00px;top:279.20px;font-size:14px;line-height:14px;color:#000;transform:scaleX(0.8414);">Positive</span><span class="t" style="left:167.20px;top:279.20px;font-size:14px;line-height:14px;color:#000;transform:scaleX(0.8595);">Negative</span><span class="t" style="left:-138.25px;top:360.70px;font-size:14px;line-height:14px;color:#000;transform:scaleX(0.8975);">Full time management team</span><span class="t" style="left:-138.00px;top:380.45px;font-size:14px;line-height:14px;color:#000;transform:scaleX(0.8741);">Evidence of day-to-day operations (website functionality, answers phone/emails, etc.)</span><span class="t" style="left:-137.50px;top:401.20px;font-size:14px;line-height:14px;color:#000;transform:scaleX(0.8728);">Regularly convened board meetings at least on a quarterly basis</span><span class="t" style="left:-137.80px;top:421.20px;font-size:14px;line-height:14px;color:#000;transform:scaleX(0.8834);">Office lease or other business location lease</span><span class="t" style="left:-137.50px;top:440.45px;font-size:14px;line-height:14px;color:#000;transform:scaleX(0.8559);">Actively seeking equity or asset sale</span><span class="t" style="left:-228.25px;top:341.20px;font-size:14px;line-height:14px;color:#000;font-weight:bold;transform:scaleX(0.9097);">Opperational Indicators (check all that apply):</span><div style="left:3px;top:179px;width:12px;height:12px;background:#fff;border-left:1px solid #555;border-top:1px solid #555;box-sizing:border-box"></div><div style="left:140px;top:179px;width:12px;height:12px;background:#fff;border-left:1px solid #555;border-top:1px solid #555;box-sizing:border-box"></div><svg style="left:142px;top:181.5px;" width="9" height="8" viewBox="0 0 9 8"><path d="M0.700 3.200l2.600 2.800L8.300 0.800" fill="none" stroke="#000" stroke-width="1.900"/></svg><div style="left:280px;top:179px;width:12px;height:12px;background:#fff;border-left:1px solid #555;border-top:1px solid #555;box-sizing:border-box"></div><div style="left:3.5px;top:219.70000000000005px;width:12px;height:12px;background:#fff;border-left:1px solid #555;border-top:1px solid #555;box-sizing:border-box"></div><div style="left:140px;top:219.70000000000005px;width:12px;height:12px;background:#fff;border-left:1px solid #555;border-top:1px solid #555;box-sizing:border-box"></div><svg style="left:142px;top:222.20000000000005px;" width="9" height="8" viewBox="0 0 9 8"><path d="M0.700 3.200l2.600 2.800L8.300 0.800" fill="none" stroke="#000" stroke-width="1.900"/></svg><div style="left:4.200000000000003px;top:281px;width:12px;height:12px;background:#fff;border-left:1px solid #555;border-top:1px solid #555;box-sizing:border-box"></div><svg style="left:6.200000000000003px;top:283.5px;" width="9" height="8" viewBox="0 0 9 8"><path d="M0.700 3.200l2.600 2.800L8.300 0.800" fill="none" stroke="#000" stroke-width="1.900"/></svg><div style="left:141px;top:281px;width:12px;height:12px;background:#fff;border-left:1px solid #555;border-top:1px solid #555;box-sizing:border-box"></div></div><div style="left:829px;top:448px;width:796px;height:1px;background:#d4d4d4;"></div><div style="left:829px;top:468px;width:796px;height:1px;background:#d4d4d4;"></div><div style="left:829px;top:488px;width:796px;height:1px;background:#d4d4d4;"></div><div style="left:829px;top:507px;width:796px;height:1px;background:#d4d4d4;"></div><div style="left:829px;top:527px;width:796px;height:1px;background:#d4d4d4;"></div><div style="left:829px;top:546px;width:796px;height:1px;background:#d4d4d4;"></div><div style="left:829px;top:565px;width:796px;height:1px;background:#d4d4d4;"></div><div style="left:829px;top:585px;width:796px;height:1px;background:#d4d4d4;"></div><div style="left:829px;top:605px;width:796px;height:1px;background:#d4d4d4;"></div><div style="left:829px;top:625px;width:796px;height:1px;background:#d4d4d4;"></div><div style="left:829px;top:645px;width:796px;height:1px;background:#d4d4d4;"></div><div style="left:829px;top:665px;width:796px;height:1px;background:#d4d4d4;"></div><div style="left:829px;top:685px;width:796px;height:1px;background:#d4d4d4;"></div><div style="left:829px;top:705px;width:796px;height:1px;background:#d4d4d4;"></div><div style="left:829px;top:725px;width:796px;height:1px;background:#d4d4d4;"></div><div style="left:829px;top:745px;width:796px;height:1px;background:#d4d4d4;"></div><div style="left:829px;top:765px;width:796px;height:1px;background:#d4d4d4;"></div><div style="left:829px;top:785px;width:796px;height:1px;background:#d4d4d4;"></div><div style="left:829px;top:805px;width:796px;height:1px;background:#d4d4d4;"></div><div style="left:829px;top:825px;width:796px;height:1px;background:#d4d4d4;"></div><div style="left:829px;top:845px;width:796px;height:1px;background:#d4d4d4;"></div><div style="left:829px;top:865px;width:796px;height:1px;background:#d4d4d4;"></div><div style="left:829px;top:884px;width:796px;height:1px;background:#d4d4d4;"></div><div style="left:829px;top:903px;width:796px;height:1px;background:#d4d4d4;"></div><div style="left:829px;top:923px;width:796px;height:1px;background:#d4d4d4;"></div><div style="left:829px;top:943px;width:796px;height:1px;background:#d4d4d4;"></div><div style="left:829px;top:963px;width:796px;height:1px;background:#d4d4d4;"></div><div style="left:829px;top:983px;width:796px;height:1px;background:#d4d4d4;"></div><div style="left:829px;top:1003px;width:796px;height:1px;background:#d4d4d4;"></div><div style="left:829px;top:429px;width:1px;height:582px;background:#d4d4d4;"></div><div style="left:859px;top:429px;width:1px;height:582px;background:#d4d4d4;"></div><div style="left:941px;top:429px;width:1px;height:582px;background:#d4d4d4;"></div><div style="left:960px;top:429px;width:1px;height:582px;background:#d4d4d4;"></div><div style="left:1078px;top:429px;width:1px;height:582px;background:#d4d4d4;"></div><div style="left:1097px;top:429px;width:1px;height:582px;background:#d4d4d4;"></div><div style="left:1116px;top:429px;width:1px;height:582px;background:#d4d4d4;"></div><div style="left:1207px;top:429px;width:1px;height:582px;background:#d4d4d4;"></div><div style="left:1226px;top:429px;width:1px;height:582px;background:#d4d4d4;"></div><div style="left:1245px;top:429px;width:1px;height:582px;background:#d4d4d4;"></div><div style="left:1340px;top:429px;width:1px;height:582px;background:#d4d4d4;"></div><div style="left:1359px;top:429px;width:1px;height:582px;background:#d4d4d4;"></div><div style="left:1378px;top:429px;width:1px;height:582px;background:#d4d4d4;"></div><div style="left:1460px;top:429px;width:1px;height:582px;background:#d4d4d4;"></div><div style="left:1542px;top:429px;width:1px;height:582px;background:#d4d4d4;"></div><div style="left:1624px;top:429px;width:1px;height:582px;background:#d4d4d4;"></div><div style="left:860px;top:469px;width:387px;height:19px;background:#fff;"></div><div style="left:860px;top:508px;width:218px;height:19px;background:#fff;"></div><div style="left:860px;top:566px;width:218px;height:19px;background:#fff;"></div><div style="left:860px;top:606px;width:218px;height:19px;background:#fff;"></div><div style="left:860px;top:646px;width:218px;height:39px;background:#fff;"></div><div style="left:860px;top:706px;width:218px;height:39px;background:#fff;"></div><div style="left:860px;top:924px;width:100px;height:19px;background:#fff;"></div><div style="left:860px;top:766px;width:280px;height:19px;background:#fff;"></div><div style="left:961px;top:786px;width:156px;height:19px;background:#fff;"></div><div style="left:961px;top:806px;width:418px;height:19px;background:#fff;"></div><div style="left:961px;top:826px;width:285px;height:19px;background:#fff;"></div><div style="left:961px;top:846px;width:156px;height:19px;background:#fff;"></div><div style="left:961px;top:866px;width:156px;height:18px;background:#fff;"></div><span class="t" style="left:1027.80px;top:472.20px;font-size:14px;line-height:14px;color:#000;transform:scaleX(0.8634);">Fair value of equity position in Company:</span><span class="t" style="left:1119.20px;top:511.20px;font-size:14px;line-height:14px;color:#000;transform:scaleX(0.8414);">Positive</span><span class="t" style="left:1248.20px;top:511.20px;font-size:14px;line-height:14px;color:#000;transform:scaleX(0.8595);">Negative</span><span class="t" style="left:1119.20px;top:649.10px;font-size:14px;line-height:14px;color:#000;transform:scaleX(0.8414);">Positive</span><span class="t" style="left:1248.20px;top:649.10px;font-size:14px;line-height:14px;color:#000;transform:scaleX(0.8595);">Negative</span><span class="t" style="left:1119.20px;top:710.10px;font-size:14px;line-height:14px;color:#000;transform:scaleX(0.8414);">Positive</span><span class="t" style="left:1248.20px;top:710.10px;font-size:14px;line-height:14px;color:#000;transform:scaleX(0.8595);">Negative</span><span class="t" style="left:1119.20px;top:569.95px;font-size:14px;line-height:14px;color:#000;transform:scaleX(0.8467);">Positive Equity</span><span class="t" style="left:1248.20px;top:569.95px;font-size:14px;line-height:14px;color:#000;transform:scaleX(0.8540);">Negative Equity</span><span class="t" style="left:1119.20px;top:610.20px;font-size:14px;line-height:14px;color:#000;transform:scaleX(0.8875);">Debt</span><span class="t" style="left:1248.20px;top:610.20px;font-size:14px;line-height:14px;color:#000;transform:scaleX(0.8352);">Equity</span><span class="t" style="left:1381.20px;top:610.20px;font-size:14px;line-height:14px;color:#000;transform:scaleX(0.8813);">None</span><span class="t" style="left:862.00px;top:511.20px;font-size:14px;line-height:14px;color:#000;font-weight:bold;transform:scaleX(0.9080);">Investment Performance</span><span class="t" style="left:862.00px;top:569.95px;font-size:14px;line-height:14px;color:#000;font-weight:bold;transform:scaleX(0.9080);">Net Book Value</span><span class="t" style="left:862.00px;top:610.20px;font-size:14px;line-height:14px;color:#000;font-weight:bold;transform:scaleX(0.9236);">Additional Financing Obtained</span><span class="t" style="left:862.00px;top:649.20px;font-size:14px;line-height:14px;color:#000;font-weight:bold;transform:scaleX(0.9079);">Change in Cash Balance (trailing</span><span class="t" style="left:862.00px;top:668.95px;font-size:14px;line-height:14px;color:#000;font-weight:bold;transform:scaleX(0.9005);">12 months)</span><span class="t" style="left:862.00px;top:710.20px;font-size:14px;line-height:14px;color:#000;font-weight:bold;transform:scaleX(0.8929);">Projected Cash Runway (more than</span><span class="t" style="left:862.00px;top:729.95px;font-size:14px;line-height:14px;color:#000;font-weight:bold;transform:scaleX(0.9053);">three months?)</span><span class="t" style="left:862.00px;top:770.20px;font-size:14px;line-height:14px;color:#000;font-weight:bold;transform:scaleX(0.9097);">Opperational Indicators (check all that apply):</span><span class="t" style="left:862.00px;top:928.20px;font-size:14px;line-height:14px;color:#000;font-weight:bold;transform:scaleX(0.9148);">Conclusion:</span><span class="t" style="left:963.00px;top:790.20px;font-size:14px;line-height:14px;color:#000;transform:scaleX(0.8975);">Full time management team</span><span class="t" style="left:963.00px;top:810.20px;font-size:14px;line-height:14px;color:#000;transform:scaleX(0.8741);">Evidence of day-to-day operations (website functionality, answers phone/emails, etc.)</span><span class="t" style="left:963.00px;top:830.20px;font-size:14px;line-height:14px;color:#000;transform:scaleX(0.8728);">Regularly convened board meetings at least on a quarterly basis</span><span class="t" style="left:963.00px;top:850.20px;font-size:14px;line-height:14px;color:#000;transform:scaleX(0.8834);">Office lease or other business location lease</span><span class="t" style="left:963.00px;top:869.45px;font-size:14px;line-height:14px;color:#000;transform:scaleX(0.8559);">Actively seeking equity or asset sale</span><span class="t" style="left:963.00px;top:948.20px;font-size:14px;line-height:14px;color:#000;transform:scaleX(0.8931);">No Impairment</span><span class="t" style="left:963.00px;top:968.20px;font-size:14px;line-height:14px;color:#000;transform:scaleX(0.8791);">Watch List</span><span class="t" style="left:963.00px;top:988.20px;font-size:14px;line-height:14px;color:#000;transform:scaleX(0.8931);">100% Impairment</span><div style="left:1096px;top:507px;width:21px;height:21px;background:#fff;border:2px solid #000;box-sizing:border-box;"></div><div style="left:1226px;top:508px;width:20px;height:20px;background:#000;"></div><div style="left:1097px;top:565px;width:20px;height:21px;background:#fff;border:1px solid #000;border-right:none;box-sizing:border-box;"></div><div style="left:1226px;top:566px;width:20px;height:20px;background:#000;"></div><div style="left:1097px;top:605px;width:20px;height:21px;background:#fff;border:1px solid #000;box-sizing:border-box;"></div><div style="left:1226px;top:606px;width:20px;height:20px;background:#000;"></div><div style="left:1359px;top:605px;width:20px;height:21px;background:#fff;border:1px solid #000;box-sizing:border-box;"></div><div style="left:1096px;top:645px;width:21px;height:21px;background:#fff;border:2px solid #000;box-sizing:border-box;"></div><div style="left:1226px;top:646px;width:20px;height:20px;background:#000;"></div><div style="left:1226px;top:706px;width:20px;height:20px;background:#000;"></div><div style="left:1096px;top:704px;width:22px;height:23px;background:#fff;border:2px solid #217346;box-sizing:border-box;"></div><div style="left:1099px;top:707px;width:16px;height:17px;background:#000;"></div><div style="left:1112px;top:721px;width:7px;height:7px;background:#fff;"></div><div style="left:1113px;top:722px;width:6px;height:6px;background:#217346;"></div><div style="left:941px;top:785px;width:20px;height:100px;background:#fff;border:1px solid #000;box-sizing:border-box;"></div><div style="left:941px;top:805px;width:20px;height:21px;background:#000;"></div><div style="left:941px;top:845px;width:20px;height:21px;background:#000;"></div><div style="left:941px;top:943px;width:20px;height:61px;background:#fff;border:1px solid #000;box-sizing:border-box;"></div><div style="left:941px;top:963px;width:20px;height:1px;background:#000;"></div><div style="left:941px;top:983px;width:20px;height:1px;background:#000;"></div><div style="left:42px;top:428px;width:1px;height:583px;background:#a6a6a6;"></div><div style="left:42px;top:434px;width:2px;height:1px;background:#a6a6a6"></div><div style="left:42px;top:448px;width:7px;height:1px;background:#a6a6a6"></div><div style="left:42px;top:463px;width:2px;height:1px;background:#a6a6a6"></div><div style="left:42px;top:477px;width:4px;height:1px;background:#a6a6a6"></div><div style="left:42px;top:491px;width:2px;height:1px;background:#a6a6a6"></div><div style="left:42px;top:505px;width:28px;height:1px;background:#a6a6a6"></div><div style="left:42px;top:519px;width:2px;height:1px;background:#a6a6a6"></div><div style="left:42px;top:533px;width:4px;height:1px;background:#a6a6a6"></div><div style="left:42px;top:547px;width:2px;height:1px;background:#a6a6a6"></div><div style="left:42px;top:562px;width:7px;height:1px;background:#a6a6a6"></div><div style="left:42px;top:576px;width:2px;height:1px;background:#a6a6a6"></div><div style="left:42px;top:590px;width:4px;height:1px;background:#a6a6a6"></div><div style="left:42px;top:604px;width:2px;height:1px;background:#a6a6a6"></div><div style="left:42px;top:618px;width:28px;height:1px;background:#a6a6a6"></div><div style="left:42px;top:632px;width:2px;height:1px;background:#a6a6a6"></div><div style="left:42px;top:646px;width:4px;height:1px;background:#a6a6a6"></div><div style="left:42px;top:660px;width:2px;height:1px;background:#a6a6a6"></div><div style="left:42px;top:674px;width:7px;height:1px;background:#a6a6a6"></div><div style="left:42px;top:689px;width:2px;height:1px;background:#a6a6a6"></div><div style="left:42px;top:703px;width:4px;height:1px;background:#a6a6a6"></div><div style="left:42px;top:717px;width:2px;height:1px;background:#a6a6a6"></div><div style="left:42px;top:731px;width:28px;height:1px;background:#a6a6a6"></div><div style="left:42px;top:745px;width:2px;height:1px;background:#a6a6a6"></div><div style="left:42px;top:759px;width:4px;height:1px;background:#a6a6a6"></div><div style="left:42px;top:773px;width:2px;height:1px;background:#a6a6a6"></div><div style="left:42px;top:788px;width:7px;height:1px;background:#a6a6a6"></div><div style="left:42px;top:802px;width:2px;height:1px;background:#a6a6a6"></div><div style="left:42px;top:816px;width:4px;height:1px;background:#a6a6a6"></div><div style="left:42px;top:830px;width:2px;height:1px;background:#a6a6a6"></div><div style="left:42px;top:844px;width:28px;height:1px;background:#a6a6a6"></div><div style="left:42px;top:858px;width:2px;height:1px;background:#a6a6a6"></div><div style="left:42px;top:872px;width:4px;height:1px;background:#a6a6a6"></div><div style="left:42px;top:886px;width:2px;height:1px;background:#a6a6a6"></div><div style="left:42px;top:900px;width:7px;height:1px;background:#a6a6a6"></div><div style="left:42px;top:915px;width:2px;height:1px;background:#a6a6a6"></div><div style="left:42px;top:929px;width:4px;height:1px;background:#a6a6a6"></div><div style="left:42px;top:943px;width:2px;height:1px;background:#a6a6a6"></div><div style="left:42px;top:957px;width:28px;height:1px;background:#a6a6a6"></div><div style="left:42px;top:971px;width:2px;height:1px;background:#a6a6a6"></div><div style="left:42px;top:985px;width:4px;height:1px;background:#a6a6a6"></div><div style="left:42px;top:999px;width:2px;height:1px;background:#a6a6a6"></div><span class="t" style="left:44px;top:506.0px;font-size:15px;line-height:15px;color:#5e5e5e;transform:rotate(-90deg) translate(-100%,0);transform-origin:0 0;">1</span><span class="t" style="left:44px;top:619.0px;font-size:15px;line-height:15px;color:#5e5e5e;transform:rotate(-90deg) translate(-100%,0);transform-origin:0 0;">2</span><span class="t" style="left:44px;top:732.0px;font-size:15px;line-height:15px;color:#5e5e5e;transform:rotate(-90deg) translate(-100%,0);transform-origin:0 0;">3</span><span class="t" style="left:44px;top:845.0px;font-size:15px;line-height:15px;color:#5e5e5e;transform:rotate(-90deg) translate(-100%,0);transform-origin:0 0;">4</span><span class="t" style="left:44px;top:958.0px;font-size:15px;line-height:15px;color:#5e5e5e;transform:rotate(-90deg) translate(-100%,0);transform-origin:0 0;">5</span><div style="left:43px;top:706px;width:28px;height:20px;background:linear-gradient(90deg,#a3d6b8,#a9d6bb 50%,rgba(180,216,196,0));"></div><div style="left:105px;top:429px;width:1px;height:582px;background:#ababab;"></div><div style="left:80px;top:429px;width:1px;height:0px;background:#ababab;"></div><div style="left:80px;top:448px;width:25px;height:1px;background:#ababab;"></div><span class="t" style="left:93.05px;top:435.35px;font-size:12.5px;line-height:12.5px;color:#262626;">3</span><div style="left:80px;top:468px;width:25px;height:1px;background:#ababab;"></div><span class="t" style="left:93.05px;top:454.85px;font-size:12.5px;line-height:12.5px;color:#262626;">4</span><div style="left:80px;top:488px;width:25px;height:1px;background:#ababab;"></div><span class="t" style="left:93.05px;top:474.85px;font-size:12.5px;line-height:12.5px;color:#262626;">5</span><div style="left:80px;top:507px;width:25px;height:1px;background:#ababab;"></div><span class="t" style="left:93.05px;top:494.35px;font-size:12.5px;line-height:12.5px;color:#262626;">6</span><div style="left:80px;top:527px;width:25px;height:1px;background:#ababab;"></div><span class="t" style="left:93.05px;top:513.85px;font-size:12.5px;line-height:12.5px;color:#262626;">7</span><div style="left:80px;top:546px;width:25px;height:1px;background:#ababab;"></div><span class="t" style="left:93.05px;top:533.35px;font-size:12.5px;line-height:12.5px;color:#262626;">8</span><div style="left:80px;top:565px;width:25px;height:1px;background:#ababab;"></div><span class="t" style="left:93.05px;top:552.35px;font-size:12.5px;line-height:12.5px;color:#262626;">9</span><div style="left:80px;top:585px;width:25px;height:1px;background:#ababab;"></div><span class="t" style="left:86.10px;top:571.85px;font-size:12.5px;line-height:12.5px;color:#262626;">10</span><div style="left:80px;top:605px;width:25px;height:1px;background:#ababab;"></div><span class="t" style="left:87.03px;top:591.85px;font-size:12.5px;line-height:12.5px;color:#262626;">11</span><div style="left:80px;top:625px;width:25px;height:1px;background:#ababab;"></div><span class="t" style="left:86.10px;top:611.85px;font-size:12.5px;line-height:12.5px;color:#262626;">12</span><div style="left:80px;top:645px;width:25px;height:1px;background:#ababab;"></div><span class="t" style="left:86.10px;top:631.85px;font-size:12.5px;line-height:12.5px;color:#262626;">13</span><div style="left:80px;top:665px;width:25px;height:1px;background:#ababab;"></div><span class="t" style="left:86.10px;top:651.85px;font-size:12.5px;line-height:12.5px;color:#262626;">14</span><div style="left:80px;top:685px;width:25px;height:1px;background:#ababab;"></div><span class="t" style="left:86.10px;top:671.85px;font-size:12.5px;line-height:12.5px;color:#262626;">15</span><div style="left:80px;top:705px;width:25px;height:1px;background:#ababab;"></div><span class="t" style="left:86.10px;top:691.85px;font-size:12.5px;line-height:12.5px;color:#262626;">16</span><div style="left:80px;top:706px;width:25px;height:19px;background:#d2d2d2;"></div><div style="left:104px;top:705px;width:2px;height:21px;background:#217346;"></div><div style="left:80px;top:725px;width:25px;height:1px;background:#ababab;"></div><span class="t" style="left:86.10px;top:711.85px;font-size:12.5px;line-height:12.5px;color:#217346;">17</span><div style="left:80px;top:745px;width:25px;height:1px;background:#ababab;"></div><span class="t" style="left:86.10px;top:731.85px;font-size:12.5px;line-height:12.5px;color:#262626;">18</span><div style="left:80px;top:765px;width:25px;height:1px;background:#ababab;"></div><span class="t" style="left:86.10px;top:751.85px;font-size:12.5px;line-height:12.5px;color:#262626;">19</span><div style="left:80px;top:785px;width:25px;height:1px;background:#ababab;"></div><span class="t" style="left:86.10px;top:771.85px;font-size:12.5px;line-height:12.5px;color:#262626;">20</span><div style="left:80px;top:805px;width:25px;height:1px;background:#ababab;"></div><span class="t" style="left:86.10px;top:791.85px;font-size:12.5px;line-height:12.5px;color:#262626;">21</span><div style="left:80px;top:825px;width:25px;height:1px;background:#ababab;"></div><span class="t" style="left:86.10px;top:811.85px;font-size:12.5px;line-height:12.5px;color:#262626;">22</span><div style="left:80px;top:845px;width:25px;height:1px;background:#ababab;"></div><span class="t" style="left:86.10px;top:831.85px;font-size:12.5px;line-height:12.5px;color:#262626;">23</span><div style="left:80px;top:865px;width:25px;height:1px;background:#ababab;"></div><span class="t" style="left:86.10px;top:851.85px;font-size:12.5px;line-height:12.5px;color:#262626;">24</span><div style="left:80px;top:884px;width:25px;height:1px;background:#ababab;"></div><span class="t" style="left:86.10px;top:871.35px;font-size:12.5px;line-height:12.5px;color:#262626;">25</span><div style="left:80px;top:903px;width:25px;height:1px;background:#ababab;"></div><span class="t" style="left:86.10px;top:890.35px;font-size:12.5px;line-height:12.5px;color:#262626;">26</span><div style="left:80px;top:923px;width:25px;height:1px;background:#ababab;"></div><span class="t" style="left:86.10px;top:909.85px;font-size:12.5px;line-height:12.5px;color:#262626;">27</span><div style="left:80px;top:943px;width:25px;height:1px;background:#ababab;"></div><span class="t" style="left:86.10px;top:929.85px;font-size:12.5px;line-height:12.5px;color:#262626;">28</span><div style="left:80px;top:963px;width:25px;height:1px;background:#ababab;"></div><span class="t" style="left:86.10px;top:949.85px;font-size:12.5px;line-height:12.5px;color:#262626;">29</span><div style="left:80px;top:983px;width:25px;height:1px;background:#ababab;"></div><span class="t" style="left:86.10px;top:969.85px;font-size:12.5px;line-height:12.5px;color:#262626;">30</span><div style="left:80px;top:1003px;width:25px;height:1px;background:#ababab;"></div><span class="t" style="left:86.10px;top:989.85px;font-size:12.5px;line-height:12.5px;color:#262626;">31</span><div style="left:80px;top:1023px;width:25px;height:1px;background:#ababab;"></div><svg style="left:54px;top:373px;" width="7" height="7" viewBox="0 0 7 7"><path d="M7 0v7H0z" fill="#b9b9b9"/></svg><div style="left:1873px;top:356px;width:25px;height:656px;background:#d9d9d9;"></div><div style="left:1873px;top:355px;width:25px;height:24px;background:#fff;border:1px solid #e2e2e2;box-sizing:border-box;"></div><svg style="left:1880px;top:364px;" width="11" height="6" viewBox="0 0 11 6"><path d="M0 6L5.500 0 11 6z" fill="#777"/></svg><div style="left:1873px;top:404px;width:25px;height:325px;background:#fff;border:1px solid #bdbdbd;box-sizing:border-box;"></div><div style="left:1873px;top:988px;width:25px;height:25px;background:#fff;border:1px solid #d9d9d9;box-sizing:border-box;"></div><svg style="left:1880px;top:998px;" width="11" height="6" viewBox="0 0 11 6"><path d="M0 0h11L5.500 6z" fill="#777"/></svg><div style="left:32px;top:1011px;width:1840px;height:1px;background:#ababab;"></div><div style="left:32px;top:1012px;width:1869px;height:8px;background:#e6e6e6;"></div><div style="left:153px;top:1014px;width:169px;height:6px;background:#92d050;overflow:hidden;"><span class="t" style="left:14px;top:1.5px;font-size:19px;line-height:19px;color:#111;white-space:nowrap">Fuse Risk Method</span></div><div style="left:326px;top:1014px;width:71px;height:6px;background:#92d050;overflow:hidden;"><span class="t" style="left:14px;top:1.5px;font-size:19px;line-height:19px;color:#111;white-space:nowrap">FMFN</span></div><div style="left:503px;top:1014px;width:268px;height:6px;background:#92d050;overflow:hidden;"><span class="t" style="left:14px;top:1.5px;font-size:19px;line-height:19px;color:#111;white-space:nowrap">Income Method Calculator</span></div><div style="left:775px;top:1014px;width:150px;height:6px;background:#92d050;overflow:hidden;"><span class="t" style="left:14px;top:1.5px;font-size:19px;line-height:19px;color:#111;white-space:nowrap">Kleaner Sensor</span></div><div style="left:928px;top:1014px;width:113px;height:6px;background:#92d050;overflow:hidden;"><span class="t" style="left:14px;top:1.5px;font-size:19px;line-height:19px;color:#111;white-space:nowrap">Luminare</span></div><div style="left:1044px;top:1014px;width:162px;height:6px;background:#92d050;overflow:hidden;"><span class="t" style="left:14px;top:1.5px;font-size:19px;line-height:19px;color:#111;white-space:nowrap">Marko Wave</span></div><div style="left:1209px;top:1014px;width:142px;height:6px;background:#92d050;overflow:hidden;"><span class="t" style="left:14px;top:1.5px;font-size:19px;line-height:19px;color:#111;white-space:nowrap">Mersana Red</span></div><div style="left:1355px;top:1014px;width:13px;height:6px;background:#92d050;overflow:hidden;"></div><div style="left:399px;top:1012px;width:103px;height:8px;background:#fff;overflow:hidden;"><span class="t" style="left:12px;top:3.5px;font-size:19px;line-height:19px;color:#217346;font-weight:bold;white-space:nowrap">Aptimmune</span></div><div style="left:324px;top:1014px;width:1px;height:6px;background:#999;"></div><div style="left:398px;top:1014px;width:1px;height:6px;background:#999;"></div><div style="left:502px;top:1014px;width:1px;height:6px;background:#999;"></div><div style="left:773px;top:1014px;width:1px;height:6px;background:#999;"></div><div style="left:926px;top:1014px;width:1px;height:6px;background:#999;"></div><div style="left:1042px;top:1014px;width:1px;height:6px;background:#999;"></div><div style="left:1207px;top:1014px;width:1px;height:6px;background:#999;"></div><div style="left:1353px;top:1014px;width:1px;height:6px;background:#999;"></div><div style="left:1471px;top:1015px;width:25px;height:5px;background:#fff;"></div><div style="left:1496px;top:1015px;width:102px;height:5px;background:#d9d9d9;"></div><div style="left:1598px;top:1015px;width:249px;height:5px;background:#fff;border:1px solid #c0c0c0;border-bottom:none;box-sizing:border-box;"></div><div style="left:1848px;top:1015px;width:24px;height:5px;background:#fff;"></div><svg style="left:1408px;top:1015px;" width="20" height="5" viewBox="0 0 20 5"><circle cx="10" cy="10" r="9" fill="none" stroke="#8a8a8a" stroke-width="1.200"/></svg>
<!-- dialog -->
<div style="left:59px;top:175px;width:984px;height:437px;background:#f0f0f0;border:1px solid #2b88d8;box-sizing:border-box;box-shadow:0 3px 14px 2px rgba(0,0,0,.32);"><div style="left:0px;top:0px;width:982px;height:44px;background:#fff;"></div><span class="t" style="left:11.00px;top:12.50px;font-size:19px;line-height:19px;color:#000;transform:scaleX(0.9408);">Conditional Formatting Rules Manager</span><span class="t" style="left:872.00px;top:11.50px;font-size:19px;line-height:19px;color:#000;transform:scaleX(0.8518);">?</span><svg style="left:939px;top:13px;" width="17" height="17" viewBox="0 0 17 17"><path d="M1 1l15 15M16 1L1 16" stroke="#000" stroke-width="1.300"/></svg><span class="t" style="left:10.00px;top:58.25px;font-size:15.5px;line-height:15.5px;color:#000;transform:scaleX(1.0334);"><u>S</u>how formatting rules for:</span><div style="left:207px;top:55px;width:235px;height:31px;background:#fff;border:1px solid #adadad;box-sizing:border-box;"></div><span class="t" style="left:212.50px;top:61.75px;font-size:15.5px;line-height:15.5px;color:#000;transform:scaleX(0.9895);">Current Selection</span><div style="left:414px;top:57px;width:26px;height:27px;background:#e1e1e1;border:1px solid #adadad;box-sizing:border-box;"></div><svg style="left:421px;top:67px;" width="12" height="7" viewBox="0 0 12 7"><path d="M1 1l5 5 5-5" fill="none" stroke="#444" stroke-width="1.200"/></svg><div style="left:10px;top:91px;width:963px;height:290px;background:#f0f0f0;border:1px solid #828282;border-right-color:#696969;border-bottom-color:#696969;box-sizing:border-box;"></div><div style="left:11px;top:134px;width:961px;height:246px;background:#fff;border-top:1px solid #828282;border-left:1px solid #696969;box-sizing:border-box;"></div><div style="left:12px;top:94px;width:133px;height:38px;background:#e1e1e1;border:1px solid #adadad;box-sizing:border-box;"></div><div style="left:161px;top:94px;width:133px;height:38px;background:#e1e1e1;border:1px solid #adadad;box-sizing:border-box;"></div><div style="left:310px;top:94px;width:133px;height:38px;background:#e1e1e1;border:1px solid #adadad;box-sizing:border-box;"></div><div style="left:459px;top:94px;width:38px;height:38px;background:#e1e1e1;border:1px solid #adadad;box-sizing:border-box;"></div><div style="left:513px;top:94px;width:38px;height:38px;background:#e1e1e1;border:1px solid #adadad;box-sizing:border-box;"></div><svg style="left:472px;top:108px;" width="12" height="7" viewBox="0 0 12 7"><path d="M0 7L6 0l6 7z" fill="#a0a0a0"/></svg><svg style="left:526px;top:110px;" width="12" height="7" viewBox="0 0 12 7"><path d="M0 0h12L6 7z" fill="#a0a0a0"/></svg><svg style="left:27px;top:102px;" width="21" height="21" viewBox="0 0 21 21"><rect x="0.500" y="0.500" width="20" height="20" fill="#fff" stroke="#8a8a8a"/><path d="M0.500 5.500h20M0.500 10.500h20M0.500 15.500h20M5.500 0.500v20M15.500 0.500v20" stroke="#8a8a8a" stroke-opacity=".7" fill="none"/><rect x="5" y="4.500" width="11" height="6.500" fill="#eabf74"/></svg><span class="t" style="left:53.00px;top:105.50px;font-size:15.5px;line-height:15.5px;color:#000;transform:scaleX(0.9549);"><u>N</u>ew Rule...</span><svg style="left:179px;top:102px;" width="23" height="23" viewBox="0 0 23 23"><rect x="0.500" y="0.500" width="20" height="20" fill="#fff" stroke="#8a8a8a"/><path d="M0.500 5.500h20M0.500 10.500h20M0.500 15.500h20M5.500 0.500v20M15.500 0.500v20" stroke="#8a8a8a" stroke-opacity=".7" fill="none"/><rect x="5.500" y="5.500" width="10" height="5" fill="#eabf74"/><path d="M19.500 7l3 3L12 20.500l-4.500 1.500 1.500-4.500z" fill="#3b76c0"/><path d="M7.300 22.200l1-3 2 2z" fill="#444"/></svg><span class="t" style="left:205.00px;top:105.50px;font-size:15.5px;line-height:15.5px;color:#000;transform:scaleX(0.9299);"><u>E</u>dit Rule...</span><svg style="left:324px;top:103px;" width="23" height="21" viewBox="0 0 23 21"><path d="M2 1.500l19 18M21 1.500L2 19.500" stroke="#555" stroke-width="2.600" fill="none" stroke-linecap="round"/></svg><span class="t" style="left:350.00px;top:105.50px;font-size:15.5px;line-height:15.5px;color:#000;transform:scaleX(0.9754);"><u>D</u>elete Rule</span><span class="t" style="left:16.70px;top:142.40px;font-size:15.5px;line-height:15.5px;color:#000;transform:scaleX(1.0065);">Rule (applied in order shown)</span><div style="left:238px;top:136px;width:1px;height:28px;background:#e5e5e5;"></div><span class="t" style="left:243.00px;top:142.40px;font-size:15.5px;line-height:15.5px;color:#000;transform:scaleX(1.0083);">Format</span><div style="left:533px;top:136px;width:1px;height:28px;background:#e5e5e5;"></div><span class="t" style="left:538.30px;top:142.40px;font-size:15.5px;line-height:15.5px;color:#000;transform:scaleX(1.0063);">Applies to</span><div style="left:855px;top:136px;width:1px;height:28px;background:#e5e5e5;"></div><span class="t" style="left:860.00px;top:142.40px;font-size:15.5px;line-height:15.5px;color:#000;">Stop If True</span><div style="left:943px;top:136px;width:1px;height:28px;background:#e5e5e5;"></div><div style="left:12px;top:164px;width:932px;height:42px;background:#0078d7;"></div><span class="t" style="left:52.00px;top:178.50px;font-size:15.5px;line-height:15.5px;color:#fff;transform:scaleX(0.9571);">Formula: =OR(VLOOK...</span><div style="left:239px;top:169px;width:281px;height:33px;background:#000;"></div><div style="left:534px;top:171px;width:308px;height:29px;background:#fff;border:1px solid #7a7a7a;box-sizing:border-box;"></div><span class="t" style="left:539.00px;top:178.50px;font-size:15.5px;line-height:15.5px;color:#000;transform:scaleX(1.0188);">=$Z$17</span><div style="left:813px;top:171px;width:29px;height:29px;background:#fff;border:1px solid #b3adab;box-shadow:inset 0 0 0 2px #dedede;box-sizing:border-box;"></div><svg style="left:820px;top:176px;" width="13" height="17" viewBox="0 0 13 17"><path d="M6.500 0.500L12.500 6.500V8.500H9.500V7H8V12.500H5V7H3.500V8.500H0.500V6.500Z" fill="#000"/><rect x="0" y="14.800" width="12.500" height="1.200" fill="#000"/></svg><div style="left:890px;top:174px;width:20px;height:20px;background:#fff;border:1px solid #3a302b;box-sizing:border-box;"></div><div style="left:607px;top:388px;width:111px;height:35px;background:#e1e1e1;border:2px solid #0078d7;box-sizing:border-box;"></div><div style="left:734px;top:388px;width:111px;height:35px;background:#e1e1e1;border:1px solid #adadad;box-sizing:border-box;"></div><div style="left:861px;top:388px;width:111px;height:35px;background:#e1e1e1;border:1px solid #adadad;box-sizing:border-box;"></div><span class="t" style="left:652.40px;top:398.50px;font-size:15.5px;line-height:15.5px;color:#000;transform:scaleX(0.9109);">OK</span><span class="t" style="left:766.30px;top:398.50px;font-size:15.5px;line-height:15.5px;color:#000;transform:scaleX(0.9347);">Cancel</span><span class="t" style="left:896.20px;top:398.50px;font-size:15.5px;line-height:15.5px;color:#000;transform:scaleX(1.0265);">Apply</span></div>
<!-- taskbar -->
<div style="left:0px;top:1020px;width:1920px;height:60px;background:linear-gradient(90deg,#2b2d27 0,#2b2d27 1340px,#2b2c2b 1480px,#333333 1590px,#333333 1860px,#282b2d 1905px,#25282a 1920px);overflow:hidden;"><div style="left:0px;top:0px;width:72px;height:60px;background:#1d1f1c;"></div><svg style="left:24px;top:18px;" width="25" height="25" viewBox="0 0 25 25"><path d="M0 3.6L10.2 2.2V12H0z M11.4 2L25 0v12H11.4z M0 13.2h10.2v9.8L0 21.6z M11.4 13.2H25V25l-13.6-1.9z" fill="#fff"/></svg><div style="left:72px;top:0px;width:516px;height:60px;background:#f2f2f2;"></div><svg style="left:82px;top:10px;" width="40" height="40" viewBox="0 0 40 40"><circle cx="20" cy="20" r="14.7" fill="none" stroke="#9a9a9a" stroke-width="4.6"/><circle cx="20" cy="20" r="14.6" fill="none" stroke="#0a0a0a" stroke-width="3.4"/></svg><span class="t" style="left:132.00px;top:21.20px;font-size:22px;line-height:22px;color:#2b2b2b;transform:scaleX(0.9308);">Type here to search</span><svg style="left:546px;top:16px;" width="24" height="28" viewBox="0 0 24 28"><rect x="7" y="2" width="9" height="16" rx="4.5" fill="none" stroke="#333" stroke-width="1.5"/><path d="M3.5 11v3a8 8 0 0 0 16 0v-3M11.5 22v4M6 26h11" fill="none" stroke="#333" stroke-width="1.5"/></svg><svg style="left:610px;top:17px;" width="28" height="26" viewBox="0 0 28 26"><path d="M1 1h16M1 25h16M1 4v-3M17 4v-3M1 22v3M17 22v3" stroke="#fff" stroke-width="1.3" fill="none"/><rect x="1.6" y="6.6" width="14.8" height="12.8" fill="none" stroke="#fff" stroke-width="1.3"/><path d="M24 0v8M24 12v13" stroke="#fff" stroke-width="1.3"/><rect x="22" y="7" width="4" height="4" fill="#fff"/></svg><svg style="left:684px;top:15px;" width="34" height="30" viewBox="0 0 34 30"><path d="M1 3.5Q1 2 2.500 2h10l3 3h15Q32 5 32 6.500V26H1z" fill="#f7d978"/><path d="M1 8h31v18H1z" fill="#fce594"/><rect x="3" y="4" width="8" height="1.6" fill="#fff"/><path d="M7 16.500Q7 15 8.500 15h16Q26 15 26 16.500V27h-5v-7h-9v7H7z" fill="#3db3e8"/><rect x="1" y="25" width="31" height="1.6" fill="#e4c25f"/></svg><svg style="left:759px;top:13px;" width="34" height="34" viewBox="0 0 34 34"><circle cx="17" cy="17" r="16.5" fill="#dd4b3e"/><path d="M17 17L2.7 8.750A16.500 16.500 0 0 0 17 33.500L25 21z" fill="#1da362"/><path d="M17 33.500A16.500 16.500 0 0 0 31.300 8.750H17L24 21z" fill="#fed14b"/><path d="M2.7 8.750A16.500 16.500 0 0 1 31.300 8.750H17z" fill="#dd4b3e"/><circle cx="17" cy="17" r="7.6" fill="#f4f4f4"/><circle cx="17" cy="17" r="6" fill="#4c8bf5"/></svg><svg style="left:834px;top:13px;" width="34" height="34" viewBox="0 0 34 34"><path d="M14 9h18q1.500 0 1.500 1.500v14q0 1.500-1.500 1.500H14z" fill="#0a70c4"/><path d="M16 11.500h15.500v11H16z" fill="#fff"/><path d="M16 11.500l7.700 6.200 7.800-6.200" fill="none" stroke="#0a70c4" stroke-width="1.8"/><path d="M0 4.200L19 0v34L0 29.600z" fill="#0a70c4"/><ellipse cx="9.600" cy="17" rx="4.200" ry="5.400" fill="none" stroke="#fff" stroke-width="2.600"/></svg><svg style="left:909px;top:13px;" width="34" height="34" viewBox="0 0 34 34"><path d="M14 4.500h17.500q1.500 0 1.500 1.500v22q0 1.500-1.500 1.500H14z" fill="#fff" stroke="#1e7145" stroke-width="1.2"/><path d="M20 8h4.500v2.600H20zM26 8h4.500v2.600H26zM20 12.200h4.500v2.600H20zM26 12.200h4.500v2.600H26zM20 16.400h4.500V19H20zM26 16.400h4.500V19H26zM20 20.600h4.500v2.600H20zM26 20.600h4.500v2.600H26zM20 24.800h4.500v2.200H20zM26 24.800h4.500v2.200H26z" fill="#1e7145"/><path d="M0 4.200L19 0v34L0 29.600z" fill="#1e7145"/><path d="M5 10.500h3l2 4.300 2.100-4.300h2.900l-3.400 6.400 3.500 6.600h-3.100l-2.100-4.500-2.100 4.500H4.700l3.600-6.600z" fill="#fff"/></svg><div style="left:896px;top:57px;width:61px;height:3px;background:#76b9ed;"></div><svg style="left:984px;top:13px;" width="34" height="34" viewBox="0 0 34 34"><path d="M14 4.500h17.500q1.500 0 1.500 1.500v22q0 1.500-1.500 1.500H14z" fill="#fff" stroke="#2a5699" stroke-width="1.2"/><path d="M20 8.500h10.500v1.800H20zM20 12h10.500v1.800H20zM20 15.500h10.500v1.800H20zM20 19h10.500v1.800H20zM20 22.500h10.500v1.800H20zM20 26h10.500v1.500H20z" fill="#2a5699"/><path d="M0 4.200L19 0v34L0 29.600z" fill="#2a5699"/><path d="M3.200 11h2.500l1.400 8 1.700-8h2.400l1.700 8 1.400-8h2.400L14 23.500h-2.600L9.600 15.700 7.900 23.500H5.300z" fill="#fff"/></svg><svg style="left:1060px;top:13px;" width="33" height="34" viewBox="0 0 33 34"><path d="M0.600 15.200C1.800 6.500 8.300 0.600 16.800 0.600c9.700 0 15.400 7 15.400 16.200v3.200H11.700c0.400 4.900 4.300 7.300 9.300 7.300 3.600 0 6.700-1 9.400-2.600v6.700c-3 1.700-6.600 2.500-10.600 2.500C10.400 33.900 4.300 28.200 4.300 20.200c0-5.400 2.900-9.800 7.600-12.200C8.300 9.400 5.700 12 4.600 14.600 3 15.100 1.500 15.200 0.600 15.200zM11.900 13.700h11c-0.100-3.700-2-6.200-5.500-6.200s-5.200 2.800-5.500 6.200z" fill="#0f78d4"/></svg><div style="left:1046px;top:57px;width:61px;height:3px;background:#76b9ed;"></div><svg style="left:1508px;top:17px;" width="25" height="25" viewBox="0 0 25 25"><circle cx="16.500" cy="6" r="4.200" fill="none" stroke="#fff" stroke-width="1.500"/><circle cx="8" cy="12.500" r="4.200" fill="none" stroke="#fff" stroke-width="1.500"/><path d="M1 24c0-5 3-7.300 7-7.300s7 2.300 7 7.300M12.800 11.300c1-.7 2.300-1.100 3.700-1.100 4 0 7 2.300 7 7" fill="none" stroke="#fff" stroke-width="1.500"/></svg><svg style="left:1564px;top:23px;" width="20" height="12" viewBox="0 0 20 12"><path d="M1 11l9-9.500 9 9.500" fill="none" stroke="#fff" stroke-width="1.500"/></svg><svg style="left:1597px;top:20px;" width="27" height="19" viewBox="0 0 27 19"><rect x="6.200" y="4.300" width="17.600" height="12.600" fill="#fff" stroke="#fff" stroke-width="1"/><path d="M24.800 8.500v4.500" stroke="#fff" stroke-width="1.600"/><path d="M2.500 0.800v3.700M6.300 0.800v3.700" fill="none" stroke="#fff" stroke-width="1.300"/><path d="M1 4.600h6.800v3.400q0 2.300-2.300 2.300h-2.200q-2.300 0-2.300-2.300z" fill="#2f302f" stroke="#fff" stroke-width="1.300"/><path d="M4.400 10.300V17" fill="none" stroke="#fff" stroke-width="1.300"/></svg><svg style="left:1633px;top:21px;" width="26" height="17" viewBox="0 0 26 17"><path d="M6.500 16.500a5 5 0 0 1-.8-9.900A7 7 0 0 1 18.800 5a5.800 5.800 0 0 1 1.700 11.500z" fill="#1488d8"/><path d="M9.500 7.200a7 7 0 0 1 9.300-2.200 5.800 5.800 0 0 1 4 1.500L12 11z" fill="#0f5fb5" opacity=".75"/><path d="M4 16.500l16.500 0a5.800 5.800 0 0 0 5-3.500L12 10.500 1.500 13a5 5 0 0 0 5 3.500z" fill="#28a8ea"/></svg><svg style="left:1673.5px;top:21.5px;" width="22" height="19" viewBox="0 0 22 19"><path d="M1.500 17.500A16.500 16.500 0 0 1 18 1M6.500 17.500A11.500 11.500 0 0 1 18 6M11.500 17.500A6.500 6.500 0 0 1 18 11" fill="none" stroke="#dcdcdc" stroke-width="1.300"/><circle cx="17" cy="16.500" r="1.700" fill="#fff"/></svg><svg style="left:1706px;top:20px;" width="23" height="20" viewBox="0 0 23 20"><path d="M1 7h3.500l5-5.500v17l-5-5.500H1z" fill="none" stroke="#fff" stroke-width="1.300"/><path d="M14 6.500l7 7M21 6.500l-7 7" stroke="#fff" stroke-width="1.300"/></svg><span class="t" style="left:1750.00px;top:6.70px;font-size:19px;line-height:19px;color:#f2f2f2;transform:scaleX(0.9343);">10:09 AM</span><span class="t" style="left:1746.00px;top:34.50px;font-size:19px;line-height:19px;color:#f2f2f2;transform:scaleX(0.9938);">6/21/2019</span><svg style="left:1857px;top:17px;" width="40" height="40" viewBox="0 0 40 40"><path d="M1.500 1.500h22.500v16.500h-17l-5.500 5z" fill="#fff"/><path d="M6 6.500h14M6 9.700h14M6 12.900h14" stroke="#333" stroke-width="1"/><circle cx="24" cy="27.500" r="12.800" fill="#333" stroke="#8a8a8a" stroke-width="1.100"/></svg><span class="t" style="left:1872.00px;top:34.20px;font-size:16px;line-height:16px;color:#fff;font-weight:bold;transform:scaleX(1.0676);">10</span><div style="left:1912px;top:0px;width:1px;height:60px;background:#6b6d69;"></div></div>
</body></html>
